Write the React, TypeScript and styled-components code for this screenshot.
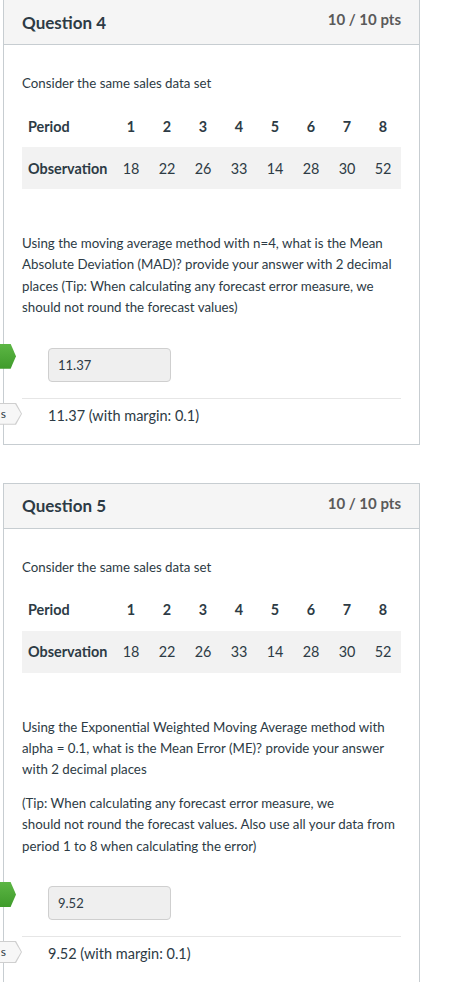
import React from "react";
import styled, { createGlobalStyle } from "styled-components";

const GlobalStyle = createGlobalStyle`
  html, body {
    margin: 0;
    padding: 0;
    background: #ffffff;
  }
  body {
    font-family: Lato, "Open Sans", "Liberation Sans", sans-serif;
    color: #2d3b45;
    overflow-x: hidden;
  }
`;

const Page = styled.div`
  width: 417px;
  padding-left: 3px;
  display: flex;
  flex-direction: column;
  gap: 38px;
  margin-top: -1px;
`;

const Card = styled.section`
  border: 1px solid #c7cdd1;
  background: #ffffff;
  display: flex;
  flex-direction: column;
`;

const Header = styled.header`
  height: 44px;
  background: #f5f5f5;
  border-bottom: 1px solid #c7cdd1;
  display: flex;
  align-items: center;
  justify-content: space-between;
  padding: 0 18px;
`;

const Title = styled.h2`
  margin: 0;
  font-size: 17px;
  font-weight: 700;
  color: #2d3b45;
`;

const Points = styled.span`
  font-size: 15px;
  font-weight: 700;
  color: #5a5a5a;
  margin-bottom: 6px;
`;

const Body = styled.div`
  padding: 28px 18px 17px 18px;
  display: flex;
  flex-direction: column;
`;

const Intro = styled.p`
  margin: 0;
  font-size: 13.3px;
  line-height: 20px;
`;

const DataTable = styled.div`
  margin-top: 12px;
  display: flex;
  flex-direction: column;
`;

const DataRow = styled.div<{ $shaded?: boolean }>`
  display: grid;
  grid-template-columns: 91px repeat(8, 36px);
  height: 42px;
  align-items: center;
  background: ${(p) => (p.$shaded ? "#f2f2f2" : "transparent")};
  font-size: 14.4px;
`;

const RowLabel = styled.span`
  font-weight: 700;
  padding-left: 6px;
`;

const Cell = styled.span<{ $bold?: boolean }>`
  text-align: center;
  font-weight: ${(p) => (p.$bold ? 700 : 400)};
`;

const Prompt = styled.p<{ $first?: boolean }>`
  margin: ${(p) => (p.$first ? "44px" : "12px")} 0 0 0;
  font-size: 13.3px;
  line-height: 21.4px;
`;

const AnswerRow = styled.div`
  position: relative;
  margin-top: 29px;
  padding-left: 26px;
  padding-bottom: 16px;
  border-bottom: 1px solid #e6e6e6;
`;

const AnswerBox = styled.div`
  width: 123px;
  height: 34px;
  box-sizing: border-box;
  background: #efefef;
  border: 1px solid #cfcfcf;
  border-radius: 4px;
  display: flex;
  align-items: center;
  padding-left: 9px;
  font-size: 13px;
  color: #2d3b45;
`;

const CorrectFlag = styled.span`
  position: absolute;
  left: -36px;
  top: -4px;
  width: 30px;
  height: 25px;
  background: linear-gradient(#5cb644, #3f9b2b);
  clip-path: polygon(0 0, 82% 0, 100% 50%, 82% 100%, 0 100%);
`;

const CorrectRow = styled.div`
  position: relative;
  padding: 6px 0 0 26px;
  font-size: 14.5px;
  line-height: 22px;
`;

const AnswerTag = styled.span`
  position: absolute;
  right: 0;
  top: 4px;
  height: 22px;
  padding: 0 16px 0 10px;
  background: #cfcfcf;
  clip-path: polygon(0 0, calc(100% - 6px) 0, 100% 50%, calc(100% - 6px) 100%, 0 100%);
  display: flex;
  align-items: center;
  white-space: nowrap;
  font-size: 12px;
  color: #2d3b45;
  &::before {
    content: "";
    position: absolute;
    inset: 1px 1px 1px 0;
    background: #f7f7f7;
    clip-path: polygon(0 0, calc(100% - 6px) 0, 100% 50%, calc(100% - 6px) 100%, 0 100%);
    z-index: 0;
  }
  & > span {
    position: relative;
    z-index: 1;
  }
`;

const TagAnchor = styled.span`
  position: absolute;
  left: -22px;
  top: 0;
  width: 22px;
  height: 100%;
`;

const periods = [1, 2, 3, 4, 5, 6, 7, 8];
const observations = [18, 22, 26, 33, 14, 28, 30, 52];

function SalesTable() {
  return (
    <DataTable>
      <DataRow>
        <RowLabel>Period</RowLabel>
        {periods.map((p) => (
          <Cell key={p} $bold>
            {p}
          </Cell>
        ))}
      </DataRow>
      <DataRow $shaded>
        <RowLabel>Observation</RowLabel>
        {observations.map((o, i) => (
          <Cell key={i}>{o}</Cell>
        ))}
      </DataRow>
    </DataTable>
  );
}

function Question({
  number,
  prompts,
  answer,
}: {
  number: number;
  prompts: React.ReactNode[];
  answer: string;
}) {
  return (
    <Card>
      <Header>
        <Title>Question {number}</Title>
        <Points>10 / 10 pts</Points>
      </Header>
      <Body>
        <Intro>Consider the same sales data set</Intro>
        <SalesTable />
        {prompts.map((p, i) => (
          <Prompt key={i} $first={i === 0}>
            {p}
          </Prompt>
        ))}
        <AnswerRow>
          <CorrectFlag />
          <AnswerBox>{answer}</AnswerBox>
        </AnswerRow>
        <CorrectRow>
          <TagAnchor>
            <AnswerTag>
              <span>s</span>
            </AnswerTag>
          </TagAnchor>
          {answer} (with margin: 0.1)
        </CorrectRow>
      </Body>
    </Card>
  );
}

export default function App() {
  return (
    <>
      <GlobalStyle />
      <Page>
        <Question
          number={4}
          answer="11.37"
          prompts={[
            "Using the moving average method with n=4, what is the Mean Absolute Deviation (MAD)? provide your answer with 2 decimal places (Tip: When calculating any forecast error measure, we should not round the forecast values)",
          ]}
        />
        <Question
          number={5}
          answer="9.52"
          prompts={[
            "Using the Exponential Weighted Moving Average method with alpha = 0.1, what is the Mean Error (ME)? provide your answer with 2 decimal places",
            <>
              (Tip: When calculating any forecast error measure, we
              <br />
              should not round the forecast values. Also use all your data from period 1 to 8 when calculating the error)
            </>,
          ]}
        />
      </Page>
    </>
  );
}
